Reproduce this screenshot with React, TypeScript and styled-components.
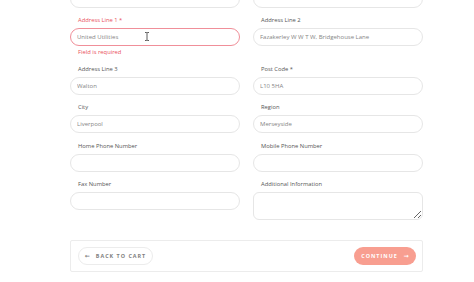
import React from 'react';
import styled, { createGlobalStyle } from 'styled-components';

const GlobalStyle = createGlobalStyle`
  html, body {
    margin: 0;
    padding: 0;
    background: #ffffff;
    overflow: hidden;
  }
  body {
    font-family: 'Open Sans', 'Liberation Sans', sans-serif;
    font-size: 6px;
    line-height: 8px;
  }
`;

type FieldDef = {
  label: string;
  value?: string;
  required?: boolean;
  error?: string;
  multiline?: boolean;
  cursor?: boolean;
};

const rows: FieldDef[][] = [
  [{ label: 'Company Name' }, { label: 'Email Address', required: true }],
  [
    { label: 'Address Line 1', value: 'United Utilities', required: true, error: 'Field is required', cursor: true },
    { label: 'Address Line 2', value: 'Fazakerley W W T W, Bridgehouse Lane' },
  ],
  [{ label: 'Address Line 3', value: 'Walton' }, { label: 'Post Code', value: 'L10 5HA', required: true }],
  [{ label: 'City', value: 'Liverpool' }, { label: 'Region', value: 'Merseyside' }],
  [{ label: 'Home Phone Number' }, { label: 'Mobile Phone Number' }],
  [{ label: 'Fax Number' }, { label: 'Additional Information', multiline: true }],
];

const IBeam = () => (
  <Cursor width="6" height="9" viewBox="0 0 6 9">
    <path d="M1 0.5h1.5l0.5 0.6 0.5-0.6H5M3 1.1v6.8M1 8.5h1.5l0.5-0.6 0.5 0.6H5" stroke="#333" strokeWidth="0.8" fill="none" />
  </Cursor>
);

const Field = ({ field }: { field: FieldDef }) => {
  const hasError = !!field.error;
  return (
    <FieldWrap>
      <Label $error={hasError}>
        {field.label}
        {field.required && ' *'}
      </Label>
      {field.multiline ? (
        <TextArea defaultValue={field.value || ''} />
      ) : (
        <InputBox>
          <Input $error={hasError} defaultValue={field.value || ''} readOnly />
          {field.cursor && <IBeam />}
        </InputBox>
      )}
      {hasError && <ErrorText>{field.error}</ErrorText>}
    </FieldWrap>
  );
};

const App = () => {
  return (
    <>
      <GlobalStyle />
      <Page>
        <Form>
          <FieldGrid>
            {rows.map((row, i) => (
              <React.Fragment key={`row_${i}`}>
                {row.map((f) => (
                  <Field key={f.label} field={f} />
                ))}
              </React.Fragment>
            ))}
          </FieldGrid>
          <Footer>
            <BackButton>
              <Arrow>←</Arrow>
              BACK TO CART
            </BackButton>
            <ContinueButton>
              CONTINUE
              <Arrow>→</Arrow>
            </ContinueButton>
          </Footer>
        </Form>
      </Page>
    </>
  );
};

export default App;

const Page = styled.div`
  display: flow-root;
  width: 474px;
  min-height: 282px;
  padding-left: 70px;
  box-sizing: border-box;
`;

const Form = styled.div`
  width: 353px;
  margin-top: -22.5px;
  display: flex;
  flex-direction: column;
`;

const FieldGrid = styled.div`
  display: grid;
  grid-template-columns: 170px 170px;
  column-gap: 13px;
  row-gap: 8.5px;
  padding-bottom: 20px;
  align-items: start;
`;

const FieldWrap = styled.div`
  display: flex;
  flex-direction: column;
  gap: 4px;
`;

const Label = styled.div<{ $error?: boolean }>`
  font-size: 5.8px;
  line-height: 8px;
  height: 8px;
  padding-left: 8px;
  white-space: nowrap;
  color: ${({ $error }) => ($error ? '#e9505c' : '#555555')};
`;

const InputBox = styled.div`
  position: relative;
  height: 18px;
`;

const Input = styled.input<{ $error?: boolean }>`
  display: block;
  box-sizing: border-box;
  width: 100%;
  height: 18px;
  margin: 0;
  border-radius: 9px;
  border: 1px solid ${({ $error }) => ($error ? '#f08f99' : '#e6e6e6')};
  background: #fff;
  padding: 0 6px;
  font-family: 'Open Sans', 'Liberation Sans', sans-serif;
  font-size: 6px;
  color: #858585;
  outline: none;
`;

const Cursor = styled.svg`
  position: absolute;
  left: 74px;
  top: 4px;
`;

const TextArea = styled.textarea`
  display: block;
  box-sizing: border-box;
  width: 100%;
  height: 28px;
  margin: 0;
  border-radius: 6px;
  border: 1px solid #e6e6e6;
  background: #fff;
  padding: 4px 6px;
  font-family: 'Open Sans', 'Liberation Sans', sans-serif;
  font-size: 6px;
  color: #858585;
  outline: none;
  resize: vertical;
`;

const ErrorText = styled.div`
  font-size: 5.8px;
  line-height: 8px;
  height: 8px;
  margin-top: -2px;
  padding-left: 8px;
  color: #e9505c;
`;

const Footer = styled.div`
  box-sizing: border-box;
  height: 32px;
  border: 1px solid #ececec;
  border-radius: 2px;
  display: flex;
  align-items: center;
  justify-content: space-between;
  padding: 0 6px 0 7px;
`;

const ButtonBase = styled.div`
  box-sizing: border-box;
  height: 18px;
  border-radius: 9px;
  display: flex;
  align-items: center;
  justify-content: center;
  gap: 6px;
  font-size: 5.4px;
  font-weight: 700;
  letter-spacing: 1px;
`;

const BackButton = styled(ButtonBase)`
  width: 75px;
  border: 1px solid #ececec;
  color: #808080;
`;

const ContinueButton = styled(ButtonBase)`
  width: 62px;
  background: #f89e90;
  color: #ffffff;
`;

const Arrow = styled.span`
  font-size: 6px;
  letter-spacing: 0;
  font-family: 'DejaVu Sans', sans-serif;
`;
